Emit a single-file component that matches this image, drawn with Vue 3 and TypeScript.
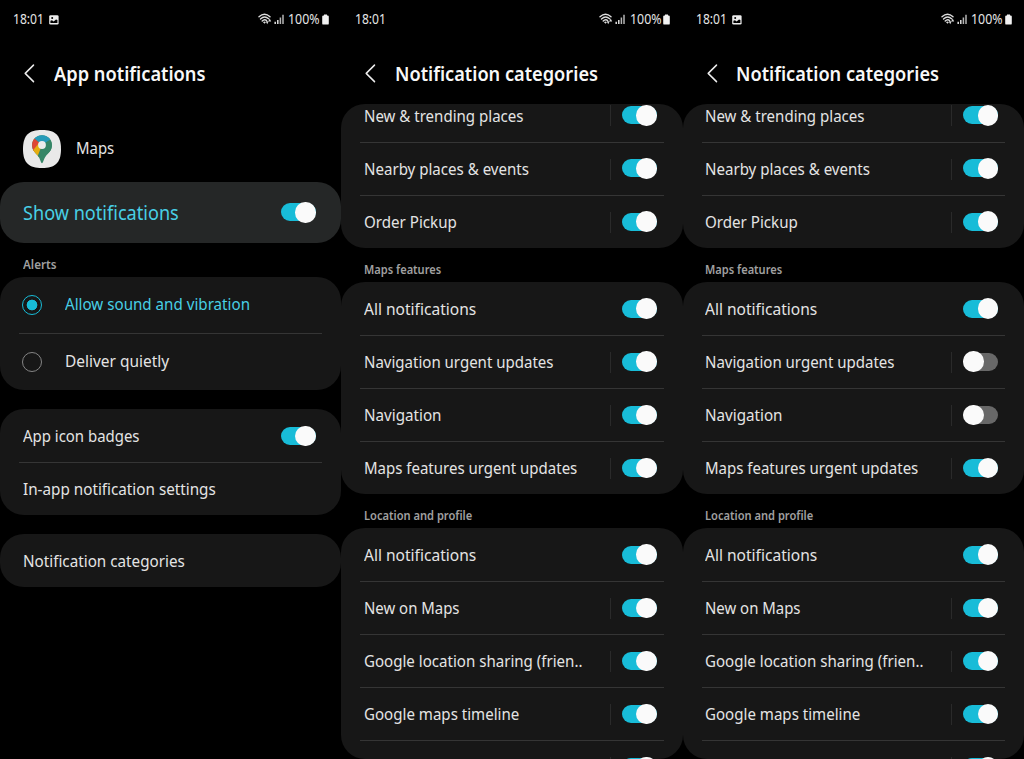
<script setup lang="ts">
interface Row {
  label: string
  width: number
  on: boolean
  split: boolean
}
interface Section {
  title: string
  width: number
  rows: Row[]
}
interface Screen {
  picture: boolean
  sections: Section[]
}

// Condenses a label horizontally so that it takes the given width in pixels.
const vFit = {
  mounted(el: HTMLElement, binding: { value: number }) {
    const range = document.createRange()
    range.selectNodeContents(el)
    const natural = range.getBoundingClientRect().width
    if (natural > 0 && binding.value > 0) {
      el.style.transformOrigin = '0 50%'
      el.style.transform = `scaleX(${binding.value / natural})`
    }
  },
}

const row = (label: string, width: number, split = true, on = true): Row => ({ label, width, on, split })

const categories = (navigationOn: boolean): Section[] => [
  {
    title: '',
    width: 0,
    rows: [
      row('New & trending places', 159.5),
      row('Nearby places & events', 165),
      row('Order Pickup', 92.8),
    ],
  },
  {
    title: 'Maps features',
    width: 77.2,
    rows: [
      row('All notifications', 112.2, false),
      row('Navigation urgent updates', 189.5, true, navigationOn),
      row('Navigation', 77.5, true, navigationOn),
      row('Maps features urgent updates', 213.3),
    ],
  },
  {
    title: 'Location and profile',
    width: 108.2,
    rows: [
      row('All notifications', 112.2, false),
      row('New on Maps', 95.5),
      row('Google location sharing (frien..', 218.5),
      row('Google maps timeline', 155.3),
      row('', 0),
    ],
  },
]

const screens: Screen[] = [
  { picture: true, sections: [] },
  { picture: false, sections: categories(true) },
  { picture: true, sections: categories(false) },
]
</script>

<template>
  <main class="board">
    <section v-for="(screen, s) in screens" :key="s" class="screen">
      <div class="status">
        <span v-fit="31" class="clock">18:01</span>
        <svg v-if="screen.picture" class="photo" viewBox="0 0 10 10">
          <rect x="0.2" y="0.2" width="9.4" height="9.4" rx="1.4" fill="#ededed" />
          <path d="M1.4 7.9V5.8L3 5.2 4.6 6.4 7 4.6 8.4 5V7.9Z" fill="#000" />
          <circle cx="3.2" cy="2.9" r="1" fill="#000" />
        </svg>
        <svg class="signals" viewBox="0 0 28 12">
          <g fill="none" stroke="#dcdcdc" stroke-width="1.4" stroke-linecap="round">
            <path d="M1 3.8Q6.5-1.3 12 3.8" />
            <path d="M2.5 6Q6.5 2 10.6 5.7" />
            <path d="M4.2 8.1Q6.5 5.7 8.6 7.6" />
          </g>
          <path d="M5 9.2Q6.4 7.8 7.9 9.2L6.5 10.8Z" fill="#dcdcdc" />
          <path d="M7.7 8.3H10.7L9.2 11.2ZM10.2 8.5H13.2L11.7 5.6Z" fill="#dcdcdc" />
          <path d="M17.2 8.8V11M19.8 7V11" stroke="#e0e0e0" stroke-width="1.5" />
          <path d="M22.4 4.6V11M25 1.8V11" stroke="#b4b4b4" stroke-width="1.5" />
        </svg>
        <span v-fit="31.5" class="percent">100%</span>
        <svg class="battery" viewBox="0 0 7 11">
          <path d="M2 0.4H5V1.4H5.6Q6.8 1.4 6.8 2.6V9.4Q6.8 10.6 5.6 10.6H1.4Q0.2 10.6 0.2 9.4V2.6Q0.2 1.4 1.4 1.4H2Z" fill="#f2f2f2" />
        </svg>
      </div>

      <header class="header">
        <svg class="back" viewBox="0 0 12 20">
          <path d="M10.5 2.1 2.2 10.4 10.5 18.6" fill="none" stroke="#ececec" stroke-width="1.5" stroke-linecap="round" stroke-linejoin="round" />
        </svg>
        <h1 v-if="screen.sections.length" v-fit="203">Notification categories</h1>
        <h1 v-else v-fit="151.5">App notifications</h1>
      </header>

      <div v-if="!screen.sections.length" class="content">
        <div class="app-row">
          <svg class="maps-icon" viewBox="0 0 38 38">
            <path d="M19 0C32 0 38 5 38 19S32 38 19 38 0 33 0 19 6 0 19 0Z" fill="#e9e9e9" />
            <clipPath id="pin">
              <path d="M19 5.2C13.4 5.2 9.1 9.5 9.1 15 9.1 20.9 12.6 22.7 15.4 26.4 17.2 28.9 17.9 33.2 19 33.2S20.8 28.9 22.6 26.4C25.4 22.7 28.9 20.9 28.9 15 28.9 9.5 24.6 5.2 19 5.2Z" />
            </clipPath>
            <g clip-path="url(#pin)">
              <rect width="38" height="38" fill="#368667" />
              <path d="M0 0H38L27.6 9.4 19 15 11.4 8.6Z" fill="#269bb9" />
              <path d="M11.4 8.6 19 15 9.5 23.8H5V8Z" fill="#df4635" />
              <path d="M16.2 12.8 9.8 20.4 15 27.4 24 17.2Z" fill="#e5ad10" />
              <path d="M19 15 27.6 9.4H32V20L15 27.4 14.6 26.2Z" fill="#368667" />
            </g>
            <circle cx="19" cy="15" r="3.9" fill="#ececec" />
          </svg>
          <span v-fit="38.2" class="label">Maps</span>
        </div>

        <div class="card master">
          <span v-fit="155.8" class="label">Show notifications</span>
          <span class="toggle on"><i /></span>
        </div>

        <h2><span v-fit="33.5">Alerts</span></h2>
        <div class="card alerts">
          <div class="choice picked">
            <span class="radio" />
            <span v-fit="185" class="label">Allow sound and vibration</span>
          </div>
          <div class="choice">
            <span class="radio" />
            <span v-fit="104.2" class="label">Deliver quietly</span>
          </div>
        </div>

        <div class="card spaced pair">
          <div class="row">
            <span v-fit="116.5" class="label">App icon badges</span>
            <span class="toggle on"><i /></span>
          </div>
          <div class="row"><span v-fit="192.8" class="label">In-app notification settings</span></div>
        </div>

        <div class="card spaced single">
          <div class="row"><span v-fit="161.8" class="label">Notification categories</span></div>
        </div>
      </div>

      <div v-else class="content">
        <template v-for="(section, i) in screen.sections" :key="i">
          <h2 v-if="section.title"><span v-fit="section.width">{{ section.title }}</span></h2>
          <div class="card" :class="['first', 'middle', 'last'][i]">
            <div v-for="(item, r) in section.rows" :key="r" class="row">
              <span v-fit="item.width" class="label">{{ item.label }}</span>
              <span v-if="item.split" class="split" />
              <span class="toggle" :class="{ on: item.on }"><i /></span>
            </div>
          </div>
        </template>
      </div>
    </section>
  </main>
</template>

<style>
body {
  background: #000;
  overflow: hidden;
}
</style>

<style scoped>
* {
  box-sizing: border-box;
}
.board {
  display: grid;
  grid-template-columns: repeat(3, 1fr);
  width: 1024px;
  height: 759px;
  overflow: hidden;
  background: #000;
  color: #e4e4e4;
  font-family: 'Noto Sans', sans-serif;
  font-variant-ligatures: none;
}
.screen {
  display: flex;
  flex-direction: column;
  min-width: 0;
  height: 759px;
}
.status {
  display: flex;
  align-items: center;
  height: 38px;
  padding: 0 12.5px 0 13.4px;
  font-size: 13.5px;
  flex: none;
}
.clock {
  width: 30px;
}
.photo {
  width: 10px;
  height: 10px;
  margin: 1px 0 0 6.1px;
}
.signals {
  width: 28px;
  height: 12px;
  margin-left: auto;
}
.percent {
  width: 31px;
  margin-left: 2.5px;
}
.battery {
  width: 7px;
  height: 11px;
  margin-left: 2.5px;
}
.header {
  display: flex;
  align-items: center;
  flex: none;
  height: 65.7px;
  padding: 5px 0 0 23px;
}
.back {
  width: 12px;
  height: 20px;
}
h1 {
  margin: 2px 0 0 18.5px;
  color: #f8f8f8;
  font-size: 19.5px;
  font-weight: 600;
  line-height: 26px;
  white-space: nowrap;
}
h2 {
  display: flex;
  align-items: center;
  height: 33.7px;
  margin: 0;
  padding: 10px 0 0 22.6px;
  color: #a0a0a0;
  font-size: 12px;
  font-weight: 600;
  line-height: 16px;
}
.label {
  font-size: 16.3px;
  line-height: 22px;
  white-space: nowrap;
}
.app-row {
  display: flex;
  align-items: center;
  gap: 14.5px;
  height: 78.3px;
  padding: 12.3px 0 0 23px;
}
.app-row .label {
  margin-top: -2px;
}
.maps-icon {
  width: 38px;
  height: 38px;
}
.card {
  overflow: hidden;
  border-radius: 24px;
  background: #171717;
}
.master {
  display: flex;
  align-items: center;
  justify-content: space-between;
  height: 61px;
  padding: 1px 25.5px 0 22.5px;
  background: #252727;
}
.master .label {
  color: #48cfe5;
  font-size: 19.5px;
}
.row {
  position: relative;
  display: flex;
  align-items: center;
  height: 53.1px;
  padding: 0 25.8px 0 22.6px;
}
.row + .row::before,
.choice + .choice::before {
  content: '';
  position: absolute;
  top: -0.6px;
  left: 19px;
  right: 19px;
  height: 1px;
  background: #353535;
}
.split {
  width: 1px;
  height: 21px;
  margin-left: auto;
  margin-right: 11.3px;
  background: #2a2a2a;
}
.toggle {
  display: flex;
  align-items: center;
  flex: none;
  width: 35px;
  height: 18px;
  margin-top: -1.2px;
  border-radius: 9px;
  background: #686868;
}
.toggle i {
  flex: none;
  width: 20.4px;
  height: 20.4px;
  border-radius: 50%;
  background: #fafafa;
}
.toggle.on {
  justify-content: flex-end;
  background: #18bcd8;
}
.label + .toggle {
  margin-left: auto;
}
.alerts {
  height: 113.5px;
}
.choice {
  position: relative;
  display: flex;
  align-items: center;
  gap: 22.5px;
  height: 57px;
  padding-left: 22px;
}
.choice .label {
  margin-top: -2px;
}
.picked .label {
  color: #48cfe5;
}
.radio {
  width: 20px;
  height: 20px;
  border: 1px solid #858585;
  border-radius: 50%;
}
.picked .radio {
  border-color: #18bcd8;
  background: radial-gradient(circle, #18bcd8 5px, transparent 5.7px);
}
.spaced {
  margin-top: 18.8px;
  padding-top: 0.8px;
}
.pair {
  height: 106.3px;
}
.single {
  height: 53.3px;
}
.first {
  height: 144.2px;
}
.first .row:first-child {
  margin-top: -14.3px;
}
.middle {
  height: 212.4px;
  padding-top: 1px;
}
.last {
  height: 231.5px;
  padding-top: 1px;
}
</style>
